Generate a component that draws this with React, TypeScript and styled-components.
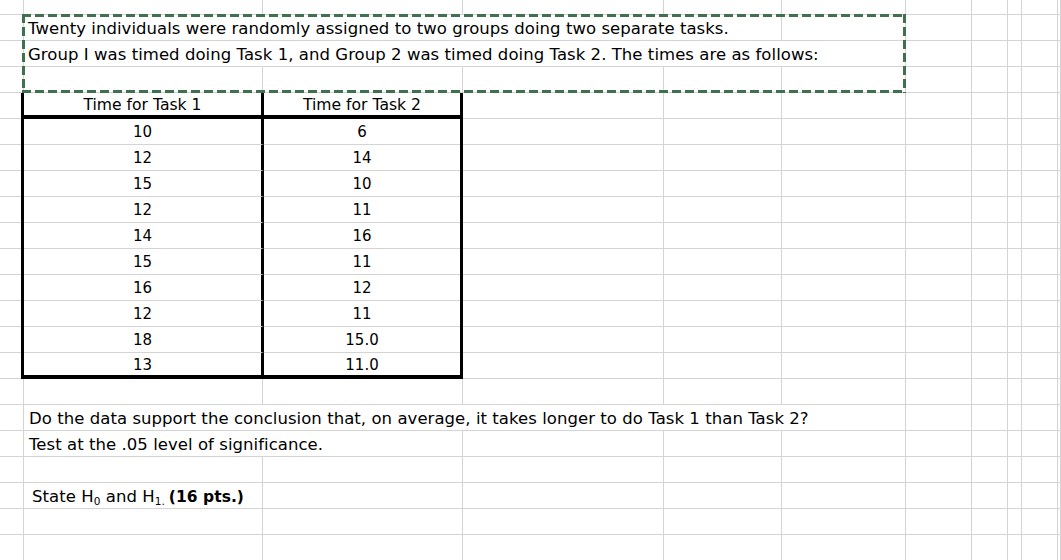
import styled, { createGlobalStyle } from 'styled-components';

const GlobalStyle = createGlobalStyle`
  html, body {
    margin: 0;
    padding: 0;
    background: #ffffff;
    overflow: hidden;
  }
  body {
    font-family: "DejaVu Sans", sans-serif;
    color: #000;
  }
`;

const GRID = '#d4d4d4';
const GREEN = '#3f7150';

// column widths, gridline sits on the last pixel of each
const COLS = [24, 239, 200, 201, 118, 124, 66, 36, 14, 36];
const ROW_COUNT = 22;

const Page = styled.div`
  position: relative;
  width: 1061px;
  height: 560px;
  overflow: hidden;
`;

const Sheet = styled.div`
  display: grid;
  grid-template-columns: ${COLS.map((w) => `${w}px`).join(' ')} 1fr;
  grid-auto-rows: 26px;
  margin-top: -11px;
`;

const Cell = styled.div<{ $span?: number; $pad?: number }>`
  grid-column: span ${(p) => p.$span || 1};
  box-sizing: border-box;
  border-right: 1px solid ${GRID};
  border-bottom: 1px solid ${GRID};
  display: flex;
  align-items: center;
  padding-left: ${(p) => p.$pad || 0}px;
  padding-top: 1px;
  font-size: 16.5px;
  letter-spacing: 0.05px;
  white-space: nowrap;
  overflow: visible;
`;

const Sub = styled.sub`
  font-size: 10.5px;
  vertical-align: -3px;
  line-height: 0;
`;

const Bold = styled.b`
  font-weight: 700;
  font-size: 15.5px;
  margin-left: 4px;
`;

const Table = styled.div`
  grid-column: 2 / 4;
  grid-row: 5 / 16;
  margin-left: -3px;
  border-left: 3px solid #000;
  border-right: 3px solid #000;
  display: grid;
  grid-template-columns: 240px 196px;
  grid-auto-rows: 26px;
`;

const TCell = styled.div<{ $head?: boolean; $last?: boolean; $first?: boolean }>`
  box-sizing: border-box;
  display: flex;
  align-items: center;
  justify-content: center;
  padding-top: ${(p) => (p.$head || p.$last ? 2 : 1)}px;
  font-size: ${(p) => (p.$head ? 15.6 : 15)}px;
  border-bottom: ${(p) =>
    p.$head || p.$last ? '4px solid #000' : `1px solid ${GRID}`};
  border-right: ${(p) => (p.$first ? '3px solid #000' : 'none')};
`;

const DashedBox = styled.div`
  position: absolute;
  left: 22px;
  top: 14px;
  width: 884px;
  height: 79px;
  pointer-events: none;
  background:
    repeating-linear-gradient(to right, ${GREEN} 0 9px, transparent 9px 13px) left top / 100% 3px no-repeat,
    repeating-linear-gradient(to right, ${GREEN} 0 9px, transparent 9px 13px) left bottom / 100% 3px no-repeat,
    repeating-linear-gradient(to bottom, ${GREEN} 0 9px, transparent 9px 13px) left top / 3px 100% no-repeat,
    repeating-linear-gradient(to bottom, ${GREEN} 0 9px, transparent 9px 13px) right top / 3px 100% no-repeat;
`;

type TextCell = { col: number; span: number; pad: number; content: React.ReactNode };

const texts: Record<number, TextCell> = {
  1: {
    col: 1,
    span: 4,
    pad: 4,
    content: 'Twenty individuals were randomly assigned to two groups doing two separate tasks.',
  },
  2: {
    col: 1,
    span: 5,
    pad: 4,
    content:
      'Group I was timed doing Task 1, and Group 2 was timed doing Task 2. The times are as follows:',
  },
  16: {
    col: 1,
    span: 5,
    pad: 5,
    content:
      'Do the data support the conclusion that, on average, it takes longer to do Task 1 than Task 2?',
  },
  17: { col: 1, span: 2, pad: 5, content: 'Test at the .05 level of significance.' },
  19: {
    col: 1,
    span: 1,
    pad: 8,
    content: (
      <span>
        State H<Sub>0</Sub> and H<Sub>1.</Sub>
        <Bold>(16 pts.)</Bold>
      </span>
    ),
  },
};

const task1 = ['10', '12', '15', '12', '14', '15', '16', '12', '18', '13'];
const task2 = ['6', '14', '10', '11', '16', '11', '12', '11', '15.0', '11.0'];

const TABLE_TOP = 4;
const TABLE_BOTTOM = 14;

const App = () => {
  const cells: React.ReactNode[] = [];
  for (let r = 0; r < ROW_COUNT; r++) {
    const t = texts[r];
    for (let c = 0; c <= COLS.length; c++) {
      if (r >= TABLE_TOP && r <= TABLE_BOTTOM && (c === 1 || c === 2)) continue;
      if (t && c === t.col) {
        cells.push(
          <Cell key={`${r}-${c}`} $span={t.span} $pad={t.pad}>
            {t.content}
          </Cell>
        );
        c += t.span - 1;
        continue;
      }
      cells.push(<Cell key={`${r}-${c}`} />);
    }
  }

  return (
    <Page>
      <GlobalStyle />
      <Sheet>
        {cells}
        <Table>
          <TCell $head $first>Time for Task 1</TCell>
          <TCell $head>Time for Task 2</TCell>
          {task1.map((v, i) => [
            <TCell key={`a${i}`} $first $last={i === task1.length - 1}>
              {v}
            </TCell>,
            <TCell key={`b${i}`} $last={i === task1.length - 1}>
              {task2[i]}
            </TCell>,
          ])}
        </Table>
      </Sheet>
      <DashedBox />
    </Page>
  );
};

export default App;
